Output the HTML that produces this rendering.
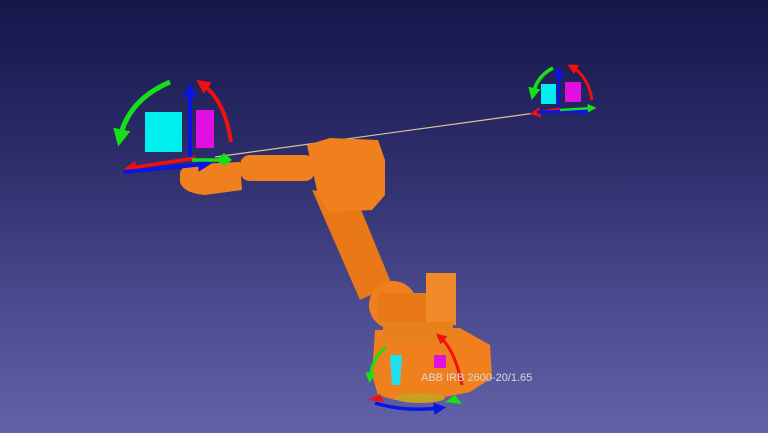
<!DOCTYPE html>
<html><head><style>
html,body{margin:0;padding:0;width:768px;height:433px;overflow:hidden}
body{background:linear-gradient(#16164a 0%,#2c2c6a 35%,#4a4a8e 70%,#6262a8 100%);position:relative;font-family:"Liberation Sans",sans-serif}
svg{position:absolute;left:0;top:0}
.t{position:absolute;left:421px;top:372px;font-size:11px;color:#d8d8e0;white-space:nowrap}
</style></head><body>
<svg width="768" height="433" viewBox="0 0 768 433">
<defs>
<marker id="ab" viewBox="0 0 10 10" refX="5" refY="5" markerWidth="3.5" markerHeight="3.5" orient="auto"><path d="M0,0L10,5L0,10z" fill="#0a14e6"/></marker>
<marker id="ar" viewBox="0 0 10 10" refX="5" refY="5" markerWidth="3.5" markerHeight="3.5" orient="auto-start-reverse"><path d="M0,0L10,5L0,10z" fill="#f01010"/></marker>
<marker id="ag" viewBox="0 0 10 10" refX="5" refY="5" markerWidth="3.5" markerHeight="3.5" orient="auto"><path d="M0,0L10,5L0,10z" fill="#18e018"/></marker>
</defs>
<line x1="215" y1="157" x2="550" y2="111" stroke="#d8c49a" stroke-width="1.2"/>
<g fill="#f0801e">
<path d="M312,190 L350,195 L362,212 L392,285 L360,300 Z" fill="#e87818"/>
<rect x="240" y="155" width="75" height="26" rx="10"/>
<path d="M180,172 Q185,163 200,164 L240,162 L242,190 L205,195 Q183,193 180,182Z"/>
<path d="M307,145 L330,138 L378,140 L385,160 L385,195 L372,210 L330,212 L318,195 Z"/>
<circle cx="393" cy="305" r="24"/>
<rect x="378" y="293" width="60" height="30" fill="#e87818"/>
<rect x="426" y="273" width="30" height="52" fill="#f08a28"/>
<path d="M375,330 L460,328 L490,345 L492,378 L470,392 L440,398 L395,400 L378,395 L372,375 Z"/>
<rect x="383" y="322" width="70" height="20" fill="#e8801c"/>
</g>
<ellipse cx="420" cy="398" rx="25" ry="5" fill="#c8a020"/>
<rect x="145" y="112" width="37" height="40" fill="#00f0f0"/>
<rect x="196" y="110" width="18" height="38" fill="#e010e0"/>
<line x1="190" y1="160" x2="190" y2="90" stroke="#0a14e6" stroke-width="4" marker-end="url(#ab)"/>
<path d="M170,82 Q128,100 120,138" fill="none" stroke="#18e018" stroke-width="5" marker-end="url(#ag)"/>
<path d="M231,142 Q225,100 202,84" fill="none" stroke="#f01010" stroke-width="4" marker-end="url(#ar)"/>
<line x1="196" y1="158" x2="130" y2="168" stroke="#f01010" stroke-width="3.5" marker-end="url(#ar)"/>
<line x1="124" y1="172" x2="205" y2="164" stroke="#0a14e6" stroke-width="4" marker-end="url(#ab)"/>
<line x1="192" y1="160" x2="228" y2="160" stroke="#18e018" stroke-width="3.5"/>
<path d="M216,160 L224,153 L232,160 L224,166Z" fill="#18e018"/>
<rect x="541" y="84" width="15" height="20" fill="#00f0f0"/>
<rect x="565" y="82" width="16" height="20" fill="#e010e0"/>
<line x1="559" y1="111" x2="559" y2="72" stroke="#0a14e6" stroke-width="3" marker-end="url(#ab)"/>
<path d="M553,68 Q537,76 533,94" fill="none" stroke="#18e018" stroke-width="3.5" marker-end="url(#ag)"/>
<path d="M592,100 Q588,76 572,67" fill="none" stroke="#f01010" stroke-width="3" marker-end="url(#ar)"/>
<line x1="560" y1="109" x2="535" y2="113" stroke="#f01010" stroke-width="3" marker-end="url(#ar)"/>
<line x1="537" y1="112" x2="585" y2="111" stroke="#0a14e6" stroke-width="3" marker-end="url(#ab)"/>
<line x1="560" y1="110" x2="592" y2="108" stroke="#18e018" stroke-width="2.5" marker-end="url(#ag)"/>
<path d="M390,355 L402,355 L400,385 L392,385Z" fill="#20e0f0"/>
<rect x="434" y="355" width="12" height="13" fill="#e010e0"/>
<path d="M386,347 Q372,358 370,378" fill="none" stroke="#18e018" stroke-width="3" marker-end="url(#ag)"/>
<path d="M462,385 Q455,350 440,337" fill="none" stroke="#f01010" stroke-width="3" marker-end="url(#ar)"/>
<path d="M375,403 Q405,412 440,408" fill="none" stroke="#0a14e6" stroke-width="3.5" marker-end="url(#ab)"/>
<path d="M368,400 L380,394 L384,402Z" fill="#f01010"/>
<path d="M445,402 L455,395 L462,404Z" fill="#18e018"/>
</svg>
<div class="t">ABB IRB 2600-20/1.65</div>
</body></html>
